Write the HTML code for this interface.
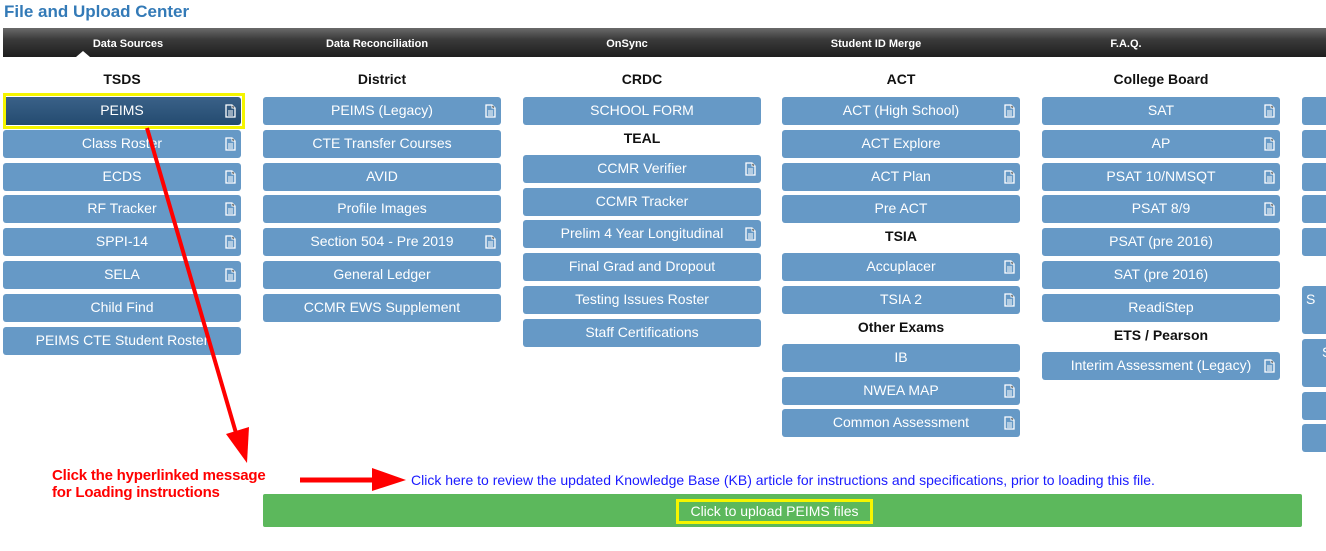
<!DOCTYPE html>
<html><head><meta charset="utf-8"><style>
*{margin:0;padding:0;box-sizing:border-box}
body{width:1326px;height:551px;overflow:hidden;background:#fff;font-family:"Liberation Sans",Arial,sans-serif;position:relative}
h1{position:absolute;left:4px;top:2px;font-size:17px;color:#337ab7;font-weight:bold}
.nav{position:absolute;left:3px;top:28px;width:1323px;height:29px;background:linear-gradient(#6a6a6a,#3a3a3a 40%,#1e1e1e);}
.nav span{position:absolute;top:10px;color:#fff;font-size:11px;font-weight:bold;transform:translateX(-50%);white-space:nowrap}
.notch{position:absolute;left:76px;top:51px;width:0;height:0;border-left:7px solid transparent;border-right:7px solid transparent;border-bottom:6px solid #fff}
.col{position:absolute;top:65px;width:238px}
.hd{height:32px;line-height:28px;text-align:center;font-weight:bold;font-size:14px;color:#111}
.mh{height:25px;line-height:17px;text-align:center;font-weight:bold;font-size:14px;color:#111}
.b{height:28px;margin-bottom:4.8px;background:#6699c6;border-radius:3px;color:#fff;font-size:14px;text-align:center;line-height:27px;position:relative;white-space:nowrap}
.b.t{height:48px}
.b svg{position:absolute;right:5px;top:7px}
.sel{background:linear-gradient(#3a6188,#244b70)}
.ybox{position:absolute;left:3px;top:93px;width:242px;height:36px;border:3px solid #f5f500}
.red{position:absolute;left:52px;top:467px;color:#f00;font-weight:bold;font-size:15px;line-height:17px;letter-spacing:-0.2px}
.link{position:absolute;left:411px;top:472px;color:#1a1aff;font-size:14px}
.green{position:absolute;left:263px;top:494px;width:1039px;height:33px;background:#5cb85c;border-radius:2px}
.gbtn{position:absolute;left:676px;top:499px;width:197px;height:25px;border:3px solid #f5f500;color:#fff;font-size:14px;text-align:center;line-height:19px}
</style></head><body>
<svg width="0" height="0" style="position:absolute"><defs><symbol id="d" viewBox="0 0 11 14"><path d="M1 1h6l3 3v9H1z" fill="none" stroke="#fff" stroke-width="1.3"/><path d="M7 1v3h3M3 7h5M3 9h5M3 11h5" stroke="#fff" stroke-width="1"/></symbol></defs></svg>
<h1>File and Upload Center</h1>
<div class="nav"><span style="left:125px">Data Sources</span><span style="left:374px">Data Reconciliation</span><span style="left:624px">OnSync</span><span style="left:873px">Student ID Merge</span><span style="left:1123px">F.A.Q.</span></div>
<div class="notch"></div>

<div class="col" style="left:3px"><div class="hd">TSDS</div>
<div class="b sel">PEIMS<svg width="11" height="14"><use href="#d"/></svg></div>
<div class="b">Class Roster<svg width="11" height="14"><use href="#d"/></svg></div>
<div class="b">ECDS<svg width="11" height="14"><use href="#d"/></svg></div>
<div class="b">RF Tracker<svg width="11" height="14"><use href="#d"/></svg></div>
<div class="b">SPPI-14<svg width="11" height="14"><use href="#d"/></svg></div>
<div class="b">SELA<svg width="11" height="14"><use href="#d"/></svg></div>
<div class="b">Child Find</div>
<div class="b">PEIMS CTE Student Roster</div></div>

<div class="col" style="left:263px"><div class="hd">District</div>
<div class="b">PEIMS (Legacy)<svg width="11" height="14"><use href="#d"/></svg></div>
<div class="b">CTE Transfer Courses</div>
<div class="b">AVID</div>
<div class="b">Profile Images</div>
<div class="b">Section 504 - Pre 2019<svg width="11" height="14"><use href="#d"/></svg></div>
<div class="b">General Ledger</div>
<div class="b">CCMR EWS Supplement</div></div>

<div class="col" style="left:523px"><div class="hd">CRDC</div>
<div class="b">SCHOOL FORM</div><div class="mh">TEAL</div>
<div class="b">CCMR Verifier<svg width="11" height="14"><use href="#d"/></svg></div>
<div class="b">CCMR Tracker</div>
<div class="b">Prelim 4 Year Longitudinal<svg width="11" height="14"><use href="#d"/></svg></div>
<div class="b">Final Grad and Dropout</div>
<div class="b">Testing Issues Roster</div>
<div class="b">Staff Certifications</div></div>

<div class="col" style="left:782px"><div class="hd">ACT</div>
<div class="b">ACT (High School)<svg width="11" height="14"><use href="#d"/></svg></div>
<div class="b">ACT Explore</div>
<div class="b">ACT Plan<svg width="11" height="14"><use href="#d"/></svg></div>
<div class="b">Pre ACT</div><div class="mh">TSIA</div>
<div class="b">Accuplacer<svg width="11" height="14"><use href="#d"/></svg></div>
<div class="b">TSIA 2<svg width="11" height="14"><use href="#d"/></svg></div><div class="mh">Other Exams</div>
<div class="b">IB</div>
<div class="b">NWEA MAP<svg width="11" height="14"><use href="#d"/></svg></div>
<div class="b">Common Assessment<svg width="11" height="14"><use href="#d"/></svg></div></div>

<div class="col" style="left:1042px"><div class="hd">College Board</div>
<div class="b">SAT<svg width="11" height="14"><use href="#d"/></svg></div>
<div class="b">AP<svg width="11" height="14"><use href="#d"/></svg></div>
<div class="b">PSAT 10/NMSQT<svg width="11" height="14"><use href="#d"/></svg></div>
<div class="b">PSAT 8/9<svg width="11" height="14"><use href="#d"/></svg></div>
<div class="b">PSAT (pre 2016)</div>
<div class="b">SAT (pre 2016)</div>
<div class="b">ReadiStep</div><div class="mh">ETS / Pearson</div>
<div class="b">Interim Assessment (Legacy)<svg width="11" height="14"><use href="#d"/></svg></div></div>

<div class="col" style="left:1302px"><div class="hd">&nbsp;</div>
<div class="b"></div><div class="b"></div><div class="b"></div><div class="b"></div><div class="b"></div><div class="mh"></div>
<div class="b t" style="text-align:left;padding-left:4px;line-height:26px">S</div><div class="b t" style="text-align:left;padding-left:20px;line-height:26px">S</div><div class="b"></div><div class="b"></div></div>

<div class="ybox"></div>
<svg style="position:absolute;left:0;top:0" width="1326" height="551">
<line x1="147" y1="128" x2="236" y2="433" stroke="#f00" stroke-width="4"/>
<polygon points="226,434 249,427 247,463" fill="#f00"/>
<line x1="300" y1="480" x2="374" y2="480" stroke="#f00" stroke-width="5"/>
<polygon points="372,468 372,491 406,480" fill="#f00"/>
</svg>
<div class="red">Click the hyperlinked message<br>for Loading instructions</div>
<div class="link">Click here to review the updated Knowledge Base (KB) article for instructions and specifications, prior to loading this file.</div>
<div class="green"></div>
<div class="gbtn">Click to upload PEIMS files</div>
</body></html>
